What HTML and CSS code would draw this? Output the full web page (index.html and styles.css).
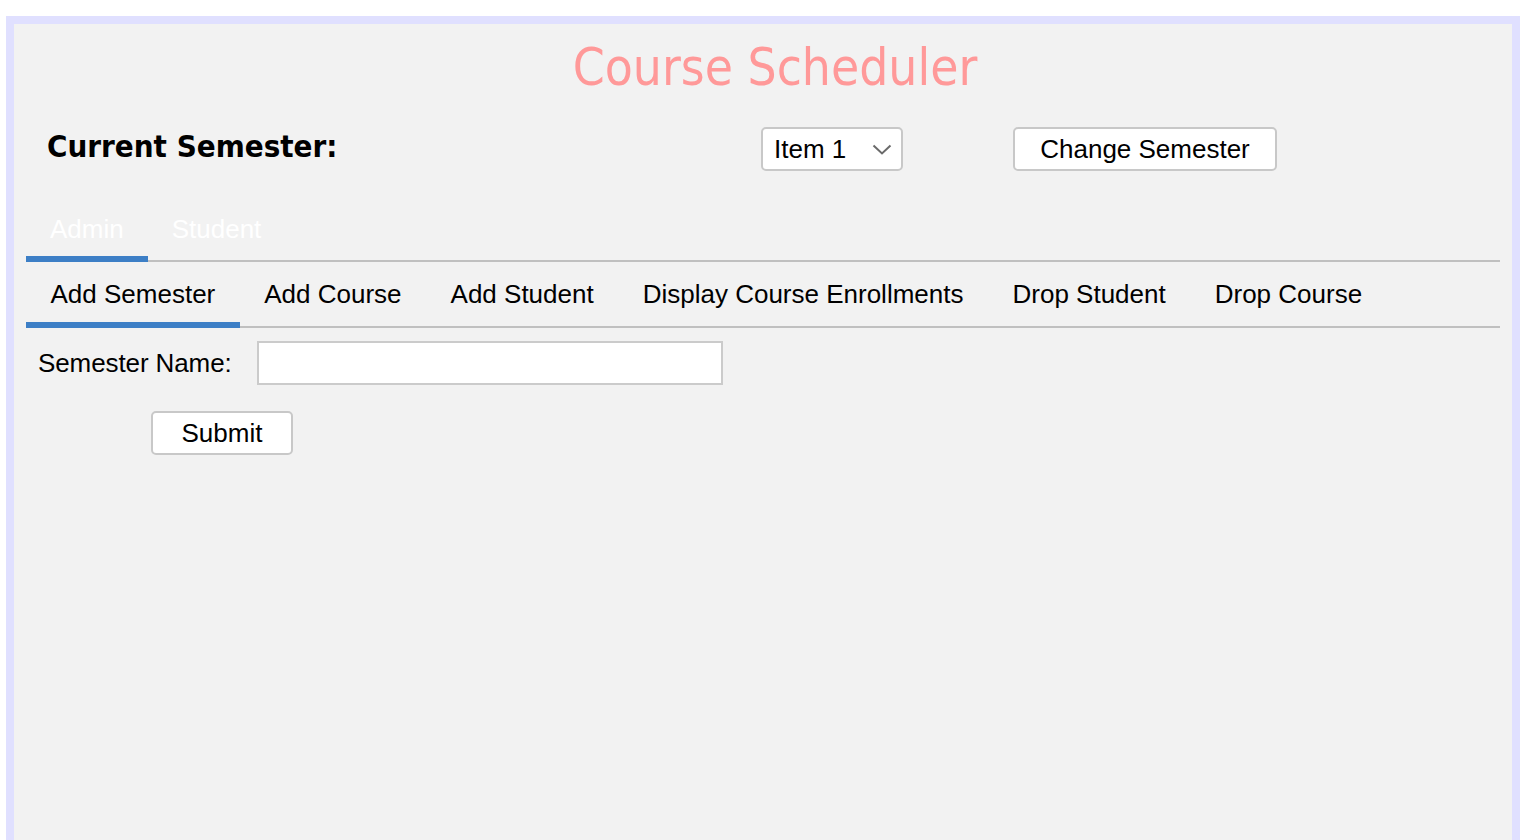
FILE: index.html
```html
<!DOCTYPE html>
<html lang="en">
<head>
<meta charset="utf-8">
<title>Course Scheduler</title>
<link rel="stylesheet" href="styles.css">
</head>
<body>
<div class="frame">
  <h1 class="title">Course Scheduler</h1>
  <div class="semester-row">
    <div class="current-label">Current Semester:</div>
    <div class="select-cell">
      <div class="select">
        <span class="select-text">Item 1</span>
        <svg class="chevron" width="20" height="11" viewBox="0 0 20 11"><path d="M1.5 1.5 L10 9.5 L18.5 1.5" fill="none" stroke="#6a6a6a" stroke-width="2"/></svg>
      </div>
    </div>
    <div class="btn-cell">
      <button class="btn btn-change">Change Semester</button>
    </div>
  </div>
  <div class="tabbar main-tabs">
    <div class="tab active">Admin</div>
    <div class="tab">Student</div>
  </div>
  <div class="tabbar sub-tabs">
    <div class="tab active">Add Semester</div>
    <div class="tab">Add Course</div>
    <div class="tab">Add Student</div>
    <div class="tab">Display Course Enrollments</div>
    <div class="tab">Drop Student</div>
    <div class="tab">Drop Course</div>
  </div>
  <div class="form">
    <label class="form-label" for="semname">Semester Name:</label>
    <input class="text-input" id="semname" type="text">
  </div>
  <div class="submit-row">
    <button class="btn btn-submit">Submit</button>
  </div>
</div>
</body>
</html>
```

FILE: styles.css
```css
html, body {
  margin: 0;
  padding: 0;
  background: #ffffff;
  overflow: hidden;
}

body {
  font-family: "Liberation Sans", Arial, sans-serif;
  color: #000000;
}

.frame {
  margin: 16px 8px 0 6px;
  border: 8px solid #e0e0ff;
  border-bottom: none;
  background: #f2f2f2;
  height: 824px;
  box-sizing: border-box;
  display: flex;
  flex-direction: column;
}

.title {
  margin: 18px 0 0 0;
  padding-left: 24px;
  text-align: center;
  font-family: "DejaVu Sans Condensed", "DejaVu Sans", sans-serif;
  font-stretch: condensed;
  font-weight: normal;
  font-size: 51px;
  line-height: 51px;
  color: #ff9999;
}

.semester-row {
  margin-top: 34px;
  display: grid;
  grid-template-columns: 747px 252px 264px;
  height: 44px;
  align-items: center;
}

.current-label {
  padding-left: 33px;
  font-family: "DejaVu Sans Condensed", "DejaVu Sans", sans-serif;
  font-stretch: condensed;
  font-weight: bold;
  font-size: 31px;
  line-height: 44px;
  position: relative;
  top: -3px;
}

.select {
  width: 142px;
  height: 44px;
  box-sizing: border-box;
  background: #ffffff;
  border: 2px solid #c8c8c8;
  border-radius: 5px;
  display: flex;
  align-items: center;
  padding-left: 11px;
  font-size: 26px;
}

.select-text {
  width: 98px;
}

.chevron {
  display: block;
  margin-top: 1px;
}

.btn {
  font-family: "Liberation Sans", Arial, sans-serif;
  font-size: 26px;
  color: #000000;
  background: #ffffff;
  border: 2px solid #c8c8c8;
  border-radius: 5px;
  height: 44px;
  padding: 0;
  box-sizing: border-box;
  line-height: 38px;
}

.btn-change {
  width: 264px;
  display: block;
}

.tabbar {
  margin: 0 12px;
  display: flex;
  border-bottom: 2px solid #c0c0c0;
}

.tab {
  font-size: 26px;
  line-height: 30px;
  padding: 0 24px;
  border-bottom: 6px solid transparent;
  margin-bottom: -2px;
  white-space: nowrap;
}

.tab.active {
  border-bottom-color: #3d7fc6;
}

.main-tabs {
  margin-top: 31px;
}

.main-tabs .tab {
  color: #ffffff;
  padding-top: 12px;
  padding-bottom: 12px;
}

.sub-tabs .tab {
  color: #000000;
  padding: 17px 24.5px 13px 24.5px;
}

.form {
  margin-top: 13px;
  padding-left: 24px;
  display: grid;
  grid-template-columns: 219px 466px;
  align-items: center;
}

.form-label {
  font-size: 26px;
  line-height: 44px;
  letter-spacing: -0.1px;
}

.text-input {
  width: 466px;
  height: 44px;
  box-sizing: border-box;
  border: 2px solid #cbcbcb;
  background: #ffffff;
  margin: 0;
  padding: 0 8px;
  font-size: 26px;
  font-family: "Liberation Sans", Arial, sans-serif;
  outline: none;
}

.submit-row {
  margin-top: 26px;
  padding-left: 137px;
}

.btn-submit {
  width: 142px;
}
```
